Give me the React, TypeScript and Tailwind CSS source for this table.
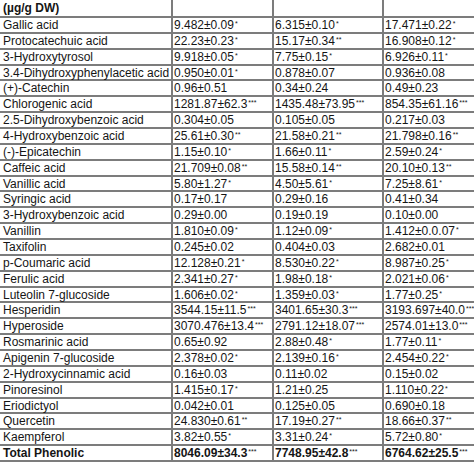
import React from 'react';

type Cell = [string, string];
type Row = { name: string; cells: Cell[]; bold?: boolean };

const ROWS: Row[] = [
  { name: 'Gallic acid', cells: [['9.482±0.09', '*'], ['6.315±0.10', '*'], ['17.471±0.22', '*']] },
  { name: 'Protocatechuic acid', cells: [['22.23±0.23', '*'], ['15.17±0.34', '**'], ['16.908±0.12', '*']] },
  { name: '3-Hydroxytyrosol', cells: [['9.918±0.05', '*'], ['7.75±0.15', '*'], ['6.926±0.11', '*']] },
  { name: '3.4-Dihydroxyphenylacetic acid', cells: [['0.950±0.01', '*'], ['0.878±0.07', ''], ['0.936±0.08', '']] },
  { name: '(+)-Catechin', cells: [['0.96±0.51', ''], ['0.34±0.24', ''], ['0.49±0.23', '']] },
  { name: 'Chlorogenic acid', cells: [['1281.87±62.3', '***'], ['1435.48±73.95', '***'], ['854.35±61.16', '***']] },
  { name: '2.5-Dihydroxybenzoic acid', cells: [['0.304±0.05', ''], ['0.105±0.05', ''], ['0.217±0.03', '']] },
  { name: '4-Hydroxybenzoic acid', cells: [['25.61±0.30', '**'], ['21.58±0.21', '**'], ['21.798±0.16', '**']] },
  { name: '(-)-Epicatechin', cells: [['1.15±0.10', '*'], ['1.66±0.11', '*'], ['2.59±0.24', '*']] },
  { name: 'Caffeic acid', cells: [['21.709±0.08', '**'], ['15.58±0.14', '**'], ['20.10±0.13', '**']] },
  { name: 'Vanillic acid', cells: [['5.80±1.27', '*'], ['4.50±5.61', '*'], ['7.25±8.61', '*']] },
  { name: 'Syringic acid', cells: [['0.17±0.17', ''], ['0.29±0.16', ''], ['0.41±0.34', '']] },
  { name: '3-Hydroxybenzoic acid', cells: [['0.29±0.00', ''], ['0.19±0.19', ''], ['0.10±0.00', '']] },
  { name: 'Vanillin', cells: [['1.810±0.09', '*'], ['1.12±0.09', '*'], ['1.412±0.0.07', '*']] },
  { name: 'Taxifolin', cells: [['0.245±0.02', ''], ['0.404±0.03', ''], ['2.682±0.01', '']] },
  { name: 'p-Coumaric acid', cells: [['12.128±0.21', '*'], ['8.530±0.22', '*'], ['8.987±0.25', '*']] },
  { name: 'Ferulic acid', cells: [['2.341±0.27', '*'], ['1.98±0.18', '*'], ['2.021±0.06', '*']] },
  { name: 'Luteolin 7-glucoside', cells: [['1.606±0.02', '*'], ['1.359±0.03', '*'], ['1.77±0.25', '*']] },
  { name: 'Hesperidin', cells: [['3544.15±11.5', '***'], ['3401.65±30.3', '***'], ['3193.697±40.0', '***']] },
  { name: 'Hyperoside', cells: [['3070.476±13.4', '***'], ['2791.12±18.07', '***'], ['2574.01±13.0', '***']] },
  { name: 'Rosmarinic acid', cells: [['0.65±0.92', ''], ['2.88±0.48', '*'], ['1.77±0.11', '*']] },
  { name: 'Apigenin 7-glucoside', cells: [['2.378±0.02', '*'], ['2.139±0.16', '*'], ['2.454±0.22', '*']] },
  { name: '2-Hydroxycinnamic acid', cells: [['0.16±0.03', ''], ['0.11±0.02', ''], ['0.15±0.02', '']] },
  { name: 'Pinoresinol', cells: [['1.415±0.17', '*'], ['1.21±0.25', ''], ['1.110±0.22', '*']] },
  { name: 'Eriodictyol', cells: [['0.042±0.01', ''], ['0.125±0.05', ''], ['0.690±0.18', '']] },
  { name: 'Quercetin', cells: [['24.830±0.61', '**'], ['17.19±0.27', '**'], ['18.66±0.37', '**']] },
  { name: 'Kaempferol', cells: [['3.82±0.55', '*'], ['3.31±0.24', '*'], ['5.72±0.80', '*']] },
  { name: 'Total Phenolic', cells: [['8046.09±34.3', '***'], ['7748.95±42.8', '***'], ['6764.62±25.5', '***']], bold: true },
];

const App: React.FC = () => {
  return (
    <div
      className="w-[474px] h-[474px] bg-white text-[#151515] text-[12px] leading-none overflow-hidden"
      style={{ fontFamily: '"Liberation Sans", Arial, sans-serif' }}
    >
      <div className="grid grid-cols-[173px_101px_110px_90px]">
        {/* header */}
        <div className="h-[18px] border-r-2 border-b-2 border-[#7c7c7c] pl-[3px] flex items-center font-bold">(µg/g DW)</div>
        <div className="h-[18px] border-r-2 border-b-2 border-[#7c7c7c]" />
        <div className="h-[18px] border-r-2 border-b-2 border-[#7c7c7c]" />
        <div className="h-[18px] border-b-2 border-[#7c7c7c]" />

        {ROWS.map((row) => (
          <React.Fragment key={row.name}>
            <div
              className={`h-[15.86px] border-r-2 border-b-2 border-[#7c7c7c] pl-[3px] flex items-center whitespace-nowrap ${row.bold ? 'font-bold' : ''}`}
            >
              {row.name}
            </div>
            {row.cells.map(([value, mark], i) => (
              <div
                key={i}
                className={`h-[15.86px] border-b-2 border-[#7c7c7c] pl-[1px] flex items-center whitespace-nowrap ${i < 2 ? 'border-r-2' : ''} ${row.bold ? 'font-bold' : ''}`}
              >
                <span>{value}</span>
                {mark && <span className="text-[7px] self-start mt-[2px] ml-[1px] font-normal">{mark}</span>}
              </div>
            ))}
          </React.Fragment>
        ))}
      </div>
    </div>
  );
};

export default App;
